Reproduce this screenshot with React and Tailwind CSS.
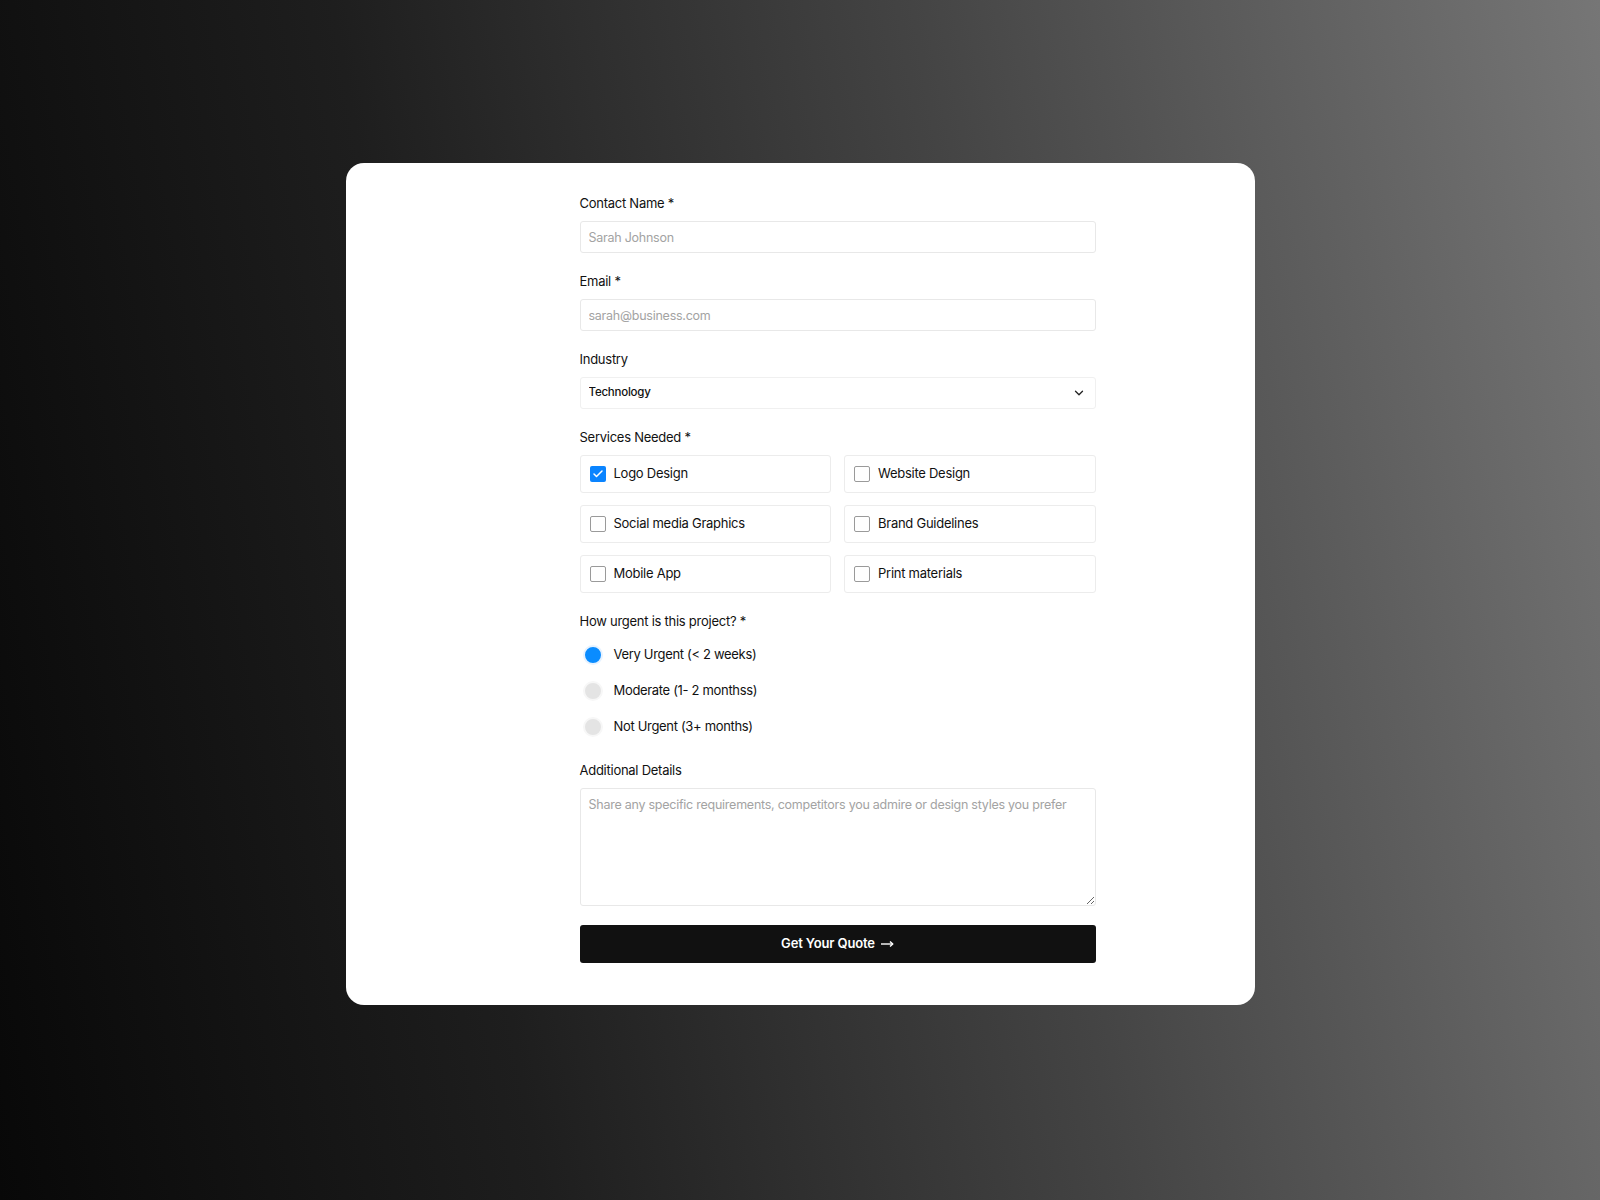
import React, { useState } from "react";
import { ChevronDown, Check } from "lucide-react";

const services = [
	"Logo Design",
	"Website Design",
	"Social media Graphics",
	"Brand Guidelines",
	"Mobile App",
	"Print materials",
];

const urgencies = ["Very Urgent (< 2 weeks)", "Moderate (1- 2 monthss)", "Not Urgent (3+ months)"];

function Label({ children }) {
	return <label className="block text-[13px] leading-5 tracking-[-0.02em] text-[#111] mb-2">{children}</label>;
}

export default function App() {
	const [checked, setChecked] = useState({ "Logo Design": true });
	const [urgency, setUrgency] = useState(urgencies[0]);

	const toggle = (s) => setChecked((prev) => ({ ...prev, [s]: !prev[s] }));

	return (
		<div
			className="min-h-screen w-full flex items-center justify-center pb-8 bg-[linear-gradient(80deg,#080808_0%,#1e1e1e_30%,#444_62%,#767676_100%)]"
			style={{ fontFamily: "Inter, 'Noto Sans', sans-serif" }}
		>
			<div className="w-[909px] bg-white rounded-[18px] pt-[30px] pb-[42px] pl-[234px] pr-[159px]">
				<form className="w-[516px]" onSubmit={(e) => e.preventDefault()}>
					<div>
						<Label>Contact Name *</Label>
						<input
							type="text"
							placeholder="Sarah Johnson"
							className="w-full h-8 px-2 text-[12.5px] tracking-[-0.02em] border border-[#e8e8e8] rounded-[3px] placeholder:text-[#a3a3a3] outline-none"
						/>
					</div>

					<div className="mt-[18px]">
						<Label>Email *</Label>
						<input
							type="email"
							placeholder="sarah@business.com"
							className="w-full h-8 px-2 text-[12.5px] tracking-[-0.02em] border border-[#e8e8e8] rounded-[3px] placeholder:text-[#a3a3a3] outline-none"
						/>
					</div>

					<div className="mt-[18px]">
						<Label>Industry</Label>
						<div className="relative">
							<select className="w-full h-8 pl-2 pr-8 text-[11.5px] font-medium tracking-[-0.02em] text-[#111] border border-[#f0f0f0] rounded-[3px] bg-white appearance-none outline-none">
								<option>Technology</option>
								<option>Healthcare</option>
								<option>Finance</option>
								<option>Retail</option>
							</select>
							<ChevronDown
								size={14}
								strokeWidth={2.25}
								className="absolute right-[10px] top-1/2 -translate-y-1/2 text-[#222] pointer-events-none"
							/>
						</div>
					</div>

					<div className="mt-[18px]">
						<Label>Services Needed *</Label>
						<div className="grid grid-cols-2 gap-x-[13px] gap-y-3">
							{services.map((s) => (
								<label
									key={s}
									className="flex items-center gap-2 h-[38px] px-[9px] border border-[#ececec] rounded-[3px] cursor-pointer text-[13px] tracking-[-0.02em] text-[#111]"
								>
									<span
										onClick={(e) => {
											e.preventDefault();
											toggle(s);
										}}
										className={
											checked[s]
												? "w-4 h-4 rounded-[2px] bg-[#0a84ff] flex items-center justify-center"
												: "w-4 h-4 rounded-[2px] border border-[#9a9a9a] bg-white"
										}
									>
										{checked[s] ? <Check size={12} strokeWidth={3} className="text-white" /> : null}
									</span>
									<span onClick={() => toggle(s)}>{s}</span>
								</label>
							))}
						</div>
					</div>

					<div className="mt-[18px]">
						<label className="block text-[13px] leading-5 tracking-[-0.02em] text-[#111]">How urgent is this project? *</label>
						<div className="mt-[6px]">
							{urgencies.map((u) => (
								<div
									key={u}
									onClick={() => setUrgency(u)}
									className="flex items-center gap-[11px] h-9 pl-[3px] cursor-pointer text-[13px] tracking-[-0.025em] text-[#111]"
								>
									<span
										className={
											urgency === u
												? "w-5 h-5 rounded-full bg-[#0a8cff] border-2 border-[#e6f2ff]"
												: "w-5 h-5 rounded-full bg-[#e4e4e4] border-2 border-[#f7f7f7]"
										}
									/>
									<span>{u}</span>
								</div>
							))}
						</div>
					</div>

					<div className="mt-[15px]">
						<Label>Additional Details</Label>
						<textarea
							placeholder="Share any specific requirements, competitors you admire or design styles you prefer"
							className="block w-full h-[118px] px-2 py-[7px] text-[12.5px] tracking-[-0.02em] border border-[#e8e8e8] rounded-[3px] placeholder:text-[#a3a3a3] outline-none"
						/>
					</div>

					<button
						type="submit"
						className="mt-[19px] w-full h-[38px] bg-[#111] text-white text-[13px] tracking-[-0.01em] font-semibold rounded-[3px] flex items-center justify-center gap-[6px]"
					>
						Get Your Quote
						<svg width="13" height="8" viewBox="0 0 13 8" fill="none" stroke="currentColor" strokeWidth="1.4">
							<path d="M0 4h11.5" />
							<path d="M9 1.5l2.8 2.5L9 6.5" strokeLinejoin="round" />
						</svg>
					</button>
				</form>
			</div>
		</div>
	);
}
